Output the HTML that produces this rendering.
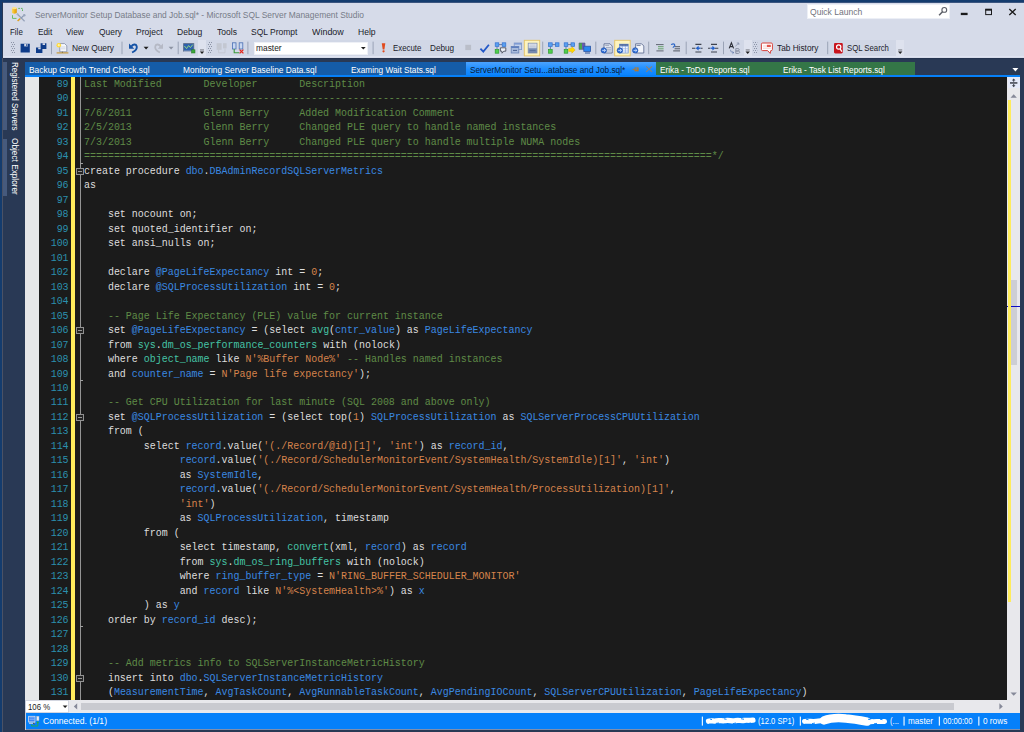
<!DOCTYPE html>
<html><head><meta charset="utf-8"><title>SSMS</title>
<style>
*{box-sizing:border-box}
html,body{margin:0;padding:0}
body{width:1024px;height:732px;overflow:hidden;background:#293955;position:relative;font-family:'Liberation Sans', sans-serif}
.a{position:absolute}
.t{position:absolute;white-space:pre;line-height:12px;transform-origin:0 50%;font-family:'Liberation Sans', sans-serif}
#ed{position:absolute;left:25px;top:77px;width:982.3px;height:623px;background:#1b1b1b;overflow:hidden}
#code,#nums{position:absolute;top:-.2px;font-family:'Liberation Mono', monospace;font-size:11px;line-height:14.49px;white-space:pre;color:#dedede;transform:scaleX(.9056)}
#code{left:59.3px;transform-origin:0 0}
#nums{left:0;width:43.6px;text-align:right;color:#2b91af;transform-origin:100% 0}
.ln{height:14.49px}
.c{color:#5f8b47}.b{color:#3a89e2}.g{color:#45c4a6}.s{color:#d6834b}
.ob{position:absolute;left:76.4px;width:7.2px;height:7px;border:1px solid #909090;background:#242424}
.ob i{position:absolute;left:1px;right:1px;top:1.9px;height:1.2px;background:#959595}
.tk{position:absolute;left:80px;width:3.4px;height:1px;background:#a0a0a0}
</style></head><body>
<!-- window frame -->
<div class="a" style="left:0;top:0;width:1024px;height:1.5px;background:#143c6e"></div>
<div class="a" style="left:0;top:0;width:2.2px;height:732px;background:#143c6e"></div>
<div class="a" style="left:2.2px;top:58px;width:.8px;height:674px;background:#4a5266"></div>
<!-- header -->
<div class="a" style="left:2.8px;top:1.5px;width:1022px;height:56.3px;background:#d6dbe9"></div><div class="a" style="left:2.8px;top:1.5px;width:1022px;height:.6px;background:#3b557f"></div>
<div class="a" style="left:2.8px;top:56.3px;width:1022px;height:1.2px;background:#dfe3f1"></div>
<div class="a" style="left:2.8px;top:57.6px;width:1022px;height:.7px;background:#25334f"></div>
<!-- toolbars -->
<div class="a" style="left:10px;top:39.8px;width:188px;height:16.2px;background:#d1d7e6"></div>
<div class="a" style="left:198px;top:39.8px;width:8px;height:16.2px;background:#dee2ee"></div>
<div class="a" style="left:206px;top:39.8px;width:537.5px;height:16.2px;background:#d1d7e6"></div>
<div class="a" style="left:743.5px;top:39.8px;width:8.5px;height:16.2px;background:#dee2ee"></div>
<div class="a" style="left:752px;top:39.8px;width:144px;height:16.2px;background:#d1d7e6"></div>
<div class="a" style="left:896px;top:39.8px;width:8px;height:16.2px;background:#dee2ee"></div>
<!-- quick launch -->
<div class="a" style="left:806.5px;top:3.9px;width:143px;height:15.2px;background:#fff;border:1px solid #eceff6"></div>
<!-- combo -->
<div class="a" style="left:253.7px;top:42px;width:114.3px;height:12.8px;background:#fff;border:1px solid #eef0f6"></div>
<!-- tab strip -->
<div class="a" style="left:25px;top:62px;width:441px;height:13.4px;background:#155ca8"></div>
<div class="a" style="left:466px;top:62px;width:190.2px;height:13.4px;background:linear-gradient(#4ba3ff,#1a8cff 60%,#0a84ff)"></div>
<div class="a" style="left:656.2px;top:62.2px;width:259px;height:13.2px;background:#347647"></div>
<div class="a" style="left:25px;top:75.2px;width:995.3px;height:1.9px;background:#0680f8"></div>
<!-- side tabs -->
<div class="a" style="left:2.8px;top:62px;width:4.2px;height:68px;background:#465a7d"></div>
<div class="a" style="left:2.8px;top:138.6px;width:4.2px;height:57.4px;background:#465a7d"></div>
<div class="t" style="left:10.2px;top:61.8px;font-size:9.6px;color:#fff;transform-origin:0 0;transform:translate(11px,0) rotate(90deg) scaleX(.835)">Registered Servers</div>
<div class="t" style="left:10.2px;top:138.4px;font-size:9.6px;color:#fff;transform-origin:0 0;transform:translate(11px,0) rotate(90deg) scaleX(.86)">Object Explorer</div>
<!-- editor -->
<div id="ed">
 <div class="a" style="left:0;top:0;width:14.3px;height:623px;background:#e6e7e8"></div>
 <div class="a" style="left:45.55px;top:0;width:4.15px;height:623px;background:#ffec5c"></div>
 <div class="a" style="left:55px;top:0;width:1px;height:623px;background:#949494"></div>
 <div id="nums"><div class="ln">89</div><div class="ln">90</div><div class="ln">91</div><div class="ln">92</div><div class="ln">93</div><div class="ln">94</div><div class="ln">95</div><div class="ln">96</div><div class="ln">97</div><div class="ln">98</div><div class="ln">99</div><div class="ln">100</div><div class="ln">101</div><div class="ln">102</div><div class="ln">103</div><div class="ln">104</div><div class="ln">105</div><div class="ln">106</div><div class="ln">107</div><div class="ln">108</div><div class="ln">109</div><div class="ln">110</div><div class="ln">111</div><div class="ln">112</div><div class="ln">113</div><div class="ln">114</div><div class="ln">115</div><div class="ln">116</div><div class="ln">117</div><div class="ln">118</div><div class="ln">119</div><div class="ln">120</div><div class="ln">121</div><div class="ln">122</div><div class="ln">123</div><div class="ln">124</div><div class="ln">125</div><div class="ln">126</div><div class="ln">127</div><div class="ln">128</div><div class="ln">129</div><div class="ln">130</div><div class="ln">131</div></div>
 <div id="code"><div class="ln"><span class="c">Last Modified       Developer       Description</span></div><div class="ln"><span class="c">-----------------------------------------------------------------------------------------------------------</span></div><div class="ln"><span class="c">7/6/2011            Glenn Berry     Added Modification Comment</span></div><div class="ln"><span class="c">2/5/2013            Glenn Berry     Changed PLE query to handle named instances</span></div><div class="ln"><span class="c">7/3/2013            Glenn Berry     Changed PLE query to handle multiple NUMA nodes</span></div><div class="ln"><span class="c">=========================================================================================================*/</span></div><div class="ln">create procedure <span class="b">dbo</span>.<span class="b">DBAdminRecordSQLServerMetrics</span></div><div class="ln">as</div><div class="ln"></div><div class="ln">    set nocount on;</div><div class="ln">    set quoted_identifier on;</div><div class="ln">    set ansi_nulls on;</div><div class="ln"></div><div class="ln">    declare <span class="b">@PageLifeExpectancy</span> int = <span class="s">0</span>;</div><div class="ln">    declare <span class="b">@SQLProcessUtilization</span> int = <span class="s">0</span>;</div><div class="ln"></div><div class="ln"><span class="c">    -- Page Life Expectancy (PLE) value for current instance</span></div><div class="ln">    set <span class="b">@PageLifeExpectancy</span> = (select <span class="g">avg</span>(<span class="b">cntr_value</span>) as <span class="b">PageLifeExpectancy</span></div><div class="ln">    from <span class="g">sys</span>.<span class="g">dm_os_performance_counters</span> with (nolock)</div><div class="ln">    where <span class="g">object_name</span> like <span class="s">N&#x27;%Buffer Node%&#x27;</span><span class="c"> -- Handles named instances</span></div><div class="ln">    and <span class="b">counter_name</span> = <span class="s">N&#x27;Page life expectancy&#x27;</span>);</div><div class="ln"></div><div class="ln"><span class="c">    -- Get CPU Utilization for last minute (SQL 2008 and above only)</span></div><div class="ln">    set <span class="b">@SQLProcessUtilization</span> = (select top(<span class="s">1</span>) <span class="b">SQLProcessUtilization</span> as <span class="b">SQLServerProcessCPUUtilization</span></div><div class="ln">    from (</div><div class="ln">          select <span class="b">record</span>.value(<span class="s">&#x27;(./Record/@id)[1]&#x27;</span>, <span class="s">&#x27;int&#x27;</span>) as <span class="b">record_id</span>,</div><div class="ln">                <span class="b">record</span>.value(<span class="s">&#x27;(./Record/SchedulerMonitorEvent/SystemHealth/SystemIdle)[1]&#x27;</span>, <span class="s">&#x27;int&#x27;</span>)</div><div class="ln">                as <span class="b">SystemIdle</span>,</div><div class="ln">                <span class="b">record</span>.value(<span class="s">&#x27;(./Record/SchedulerMonitorEvent/SystemHealth/ProcessUtilization)[1]&#x27;</span>,</div><div class="ln">                <span class="s">&#x27;int&#x27;</span>)</div><div class="ln">                as <span class="b">SQLProcessUtilization</span>, timestamp</div><div class="ln">          from (</div><div class="ln">                select timestamp, <span class="g">convert</span>(xml, <span class="b">record</span>) as <span class="b">record</span></div><div class="ln">                from <span class="g">sys</span>.<span class="g">dm_os_ring_buffers</span> with (nolock)</div><div class="ln">                where <span class="b">ring_buffer_type</span> = <span class="s">N&#x27;RING_BUFFER_SCHEDULER_MONITOR&#x27;</span></div><div class="ln">                and <span class="b">record</span> like <span class="s">N&#x27;%&lt;SystemHealth&gt;%&#x27;</span>) as <span class="b">x</span></div><div class="ln">          ) as <span class="b">y</span></div><div class="ln">    order by <span class="b">record_id</span> desc);</div><div class="ln"></div><div class="ln"></div><div class="ln"><span class="c">    -- Add metrics info to SQLServerInstanceMetricHistory</span></div><div class="ln">    insert into <span class="b">dbo</span>.<span class="b">SQLServerInstanceMetricHistory</span></div><div class="ln">    (<span class="b">MeasurementTime</span>, <span class="b">AvgTaskCount</span>, <span class="b">AvgRunnableTaskCount</span>, <span class="b">AvgPendingIOCount</span>, <span class="b">SQLServerCPUUtilization</span>, <span class="b">PageLifeExpectancy</span>)</div></div>
</div>
<div class="a" style="left:0;top:0"><div class="ob" style="top:167.64px"><i></i></div><div class="ob" style="top:327.03px"><i></i></div><div class="ob" style="top:413.97px"><i></i></div><div class="ob" style="top:674.79px"><i></i></div><div class="tk" style="top:162.74px"></div><div class="tk" style="top:380.09px"></div><div class="tk" style="top:626.42px"></div></div>
<!-- v scrollbar -->
<div class="a" style="left:1007.3px;top:77px;width:13px;height:636px;background:#e8e8ec"></div>
<div class="a" style="left:1007.6px;top:77px;width:12.7px;height:11.3px;background:#e4e9f9"></div>
<div class="a" style="left:1007.3px;top:305.9px;width:13px;height:1.5px;background:#0b0bc4"></div>
<div class="a" style="left:1011px;top:280px;width:6px;height:85.3px;background:#cdced4"></div>
<div class="a" style="left:1011px;top:305.9px;width:9px;height:1.5px;background:#0b0bc4"></div>
<div class="a" style="left:1008px;top:100px;width:3px;height:502.3px;background:#ffec5c"></div>
<!-- bottom row -->
<div class="a" style="left:25px;top:700px;width:982.3px;height:13.5px;background:#e8e8ec"></div>
<div class="a" style="left:25px;top:700px;width:43.8px;height:13px;background:#fff;border:1px solid #d3d6e0"></div>
<div class="a" style="left:81.2px;top:703px;width:872.8px;height:6.8px;background:#c9cad0"></div>
<!-- status bar -->
<div class="a" style="left:25px;top:713.1px;width:995.3px;height:16px;background:#0580fa"></div>
<div class="a" style="left:25px;top:729.1px;width:995.3px;height:.9px;background:#7f8fae"></div>
<div class="a" style="left:25px;top:700px;width:.9px;height:30px;background:#c9cedb"></div>
<svg class="a" style="left:0;top:0" width="1024" height="732" viewBox="0 0 1024 732">
<defs>
 <pattern id="grip" width="2" height="4" patternUnits="userSpaceOnUse"><rect x="0" y="0" width="1" height="1" fill="#8b93a6"/><rect x="1" y="2" width="1" height="1" fill="#8b93a6"/></pattern>
 <linearGradient id="cyl" x1="0" x2="1"><stop offset="0" stop-color="#f9d866"/><stop offset=".5" stop-color="#f2b81c"/><stop offset="1" stop-color="#d99a12"/></linearGradient>
 <linearGradient id="isense" x1="0" y1="0" x2="0" y2="1"><stop offset="0" stop-color="#eef1f7"/><stop offset=".5" stop-color="#c9d2e4"/><stop offset=".55" stop-color="#7f93b8"/><stop offset="1" stop-color="#6f84ab"/></linearGradient>
 <g id="sep"><rect x="0" y="41.6" width="1" height="12.6" fill="#9aa3b6"/></g>
 <g id="ovf"><rect x="-2" y="49.400" width="4" height="1.100" fill="#7d7f88"/><path d="M-2.200 51.600h4.400l-2.200 2.300z" fill="#1e1e1e"/></g>
 <g id="bsq"><rect width="3.6" height="3.6" fill="#5aa0f0" stroke="#2f6fd0" stroke-width=".7"/></g>
 <g id="gsq"><rect width="3.6" height="3.6" fill="#4fd04f" stroke="#2c9a2c" stroke-width=".7"/></g>
 <g id="globe"><circle r="2.7" fill="#2f6fd6" stroke="#1c4aa0" stroke-width=".6"/><path d="M-1.6 0h3.2M0.2-1.4l1.5 1.4-1.5 1.4" stroke="#dbe7ff" stroke-width=".8" fill="none"/></g>
</defs>
<!-- app icon -->
<g>
 <path d="M11.9 8.2v4.4c0 .7 1.1 1.2 2.45 1.2s2.45-.5 2.45-1.2V8.2z" fill="url(#cyl)"/>
 <ellipse cx="14.35" cy="8.2" rx="2.45" ry="1.1" fill="#fbe38a"/>
 <path d="M18.3 8.4h4.2v3.4" fill="none" stroke="#5db35d" stroke-width="1" stroke-dasharray="1.6 1"/>
 <path d="M12.5 15.2v3.2h4" fill="none" stroke="#6cbb6c" stroke-width="1"/>
 <path d="M17 13.8l7.6 7.4" stroke="#97a3ba" stroke-width="1.25"/>
 <path d="M24.6 14.6l-4 4" stroke="#8a98b2" stroke-width="1.3"/>
 <path d="M20.2 18.6l-2.600 2.400" stroke="#e0a020" stroke-width="1.5"/>
 <circle cx="24.3" cy="15.2" r="1.2" fill="#9aa7be"/>
 <circle cx="17.6" cy="14.2" r="1" fill="#a7b2c7"/>
</g>
<!-- quick launch magnifier -->
<circle cx="944.3" cy="9.9" r="2.400" fill="none" stroke="#5a5d66" stroke-width="1.1"/>
<path d="M942.5 11.8l-3.400 3.400" stroke="#5a5d66" stroke-width="1.5"/>
<!-- window buttons -->
<rect x="960.8" y="12.8" width="6.8" height="2.3" fill="#1b1b1c"/>
<rect x="985.7" y="9.7" width="5.8" height="4.9" fill="none" stroke="#1b1b1c" stroke-width="1"/>
<rect x="985.2" y="8.7" width="6.8" height="1.9" fill="#1b1b1c"/>
<path d="M1009.3 9.1l6.4 5.9M1015.7 9.1l-6.4 5.9" stroke="#1b1b1c" stroke-width="1.35"/>
<!-- toolbar 1 -->
<rect x="11" y="42" width="4" height="11" fill="url(#grip)"/>
<g fill="#0e3c8a">
 <path d="M20.6 43.8h9.2v8.6h-9.2z"/>
 <path d="M40.6 43.3h5.8v5.6h-5.8zM36 47.4h6.4v5.6H36z"/>
</g>
<path d="M24.2 43.8h3.6v2.6h-3.6z" fill="#d6dbe9"/><rect x="26.3" y="44.1" width="1" height="1.9" fill="#0e3c8a"/>
<path d="M42.6 43.3h2.4v1.8h-2.4zM38.2 47.4h2.5v1.8h-2.5z" fill="#d6dbe9"/>
<use href="#sep" x="51"/>
<!-- new query -->
<g>
 <path d="M59.8 43.6h4.8l2.2 2.2v6h-7z" fill="#f6f8fc" stroke="#7f8aa3" stroke-width=".8"/>
 <path d="M61 47h4.5M61 48.8h4.5" stroke="#b9c1d3" stroke-width=".6"/>
 <circle cx="58.8" cy="45.2" r="2.3" fill="#ffd93b"/><circle cx="58.8" cy="45.2" r="1.1" fill="#fff3a8"/>
 <path d="M56.6 52.9h11.8" stroke="#c7962e" stroke-width="1.1"/><path d="M62.4 51.6v1.4" stroke="#8a7a4a" stroke-width="1"/>
</g>
<use href="#sep" x="121.5"/>
<!-- undo -->
<g fill="none" stroke="#1553a6" stroke-width="1.9" stroke-linecap="butt">
 <path d="M131.4 46.6c1.2-2.6 4.6-2.9 5.3-.4.6 2.3-1.2 4.6-4.6 6.3"/>
</g>
<path d="M129 43.4v5.3h5.3z" fill="#1553a6"/>
<path d="M143.6 46.8h5l-2.5 2.6z" fill="#1e1e1e"/>
<!-- redo (disabled) -->
<g fill="none" stroke="#b5b9c5" stroke-width="1.8"><path d="M160.6 46.6c-1.2-2.6-4.6-2.9-5.3-.4-.6 2.3 1.2 4.6 4.6 6.3"/></g>
<path d="M163 43.4v5.3h-5.3z" fill="#b5b9c5"/>
<path d="M168.6 46.8h5l-2.5 2.6z" fill="#8d93a3"/>
<use href="#sep" x="177.7"/>
<!-- activity monitor -->
<g>
 <rect x="183.6" y="43.6" width="10.2" height="7.6" fill="#2f62ad" stroke="#5a6a86" stroke-width=".8"/>
 <path d="M184.4 46l2.2 2.6 2-3 1.8 2 2.4-3" fill="none" stroke="#9be27d" stroke-width=".9"/>
 <path d="M184 51.2h9.6" stroke="#c9d2e2" stroke-width=".8"/>
 <rect x="191.6" y="49.8" width="3.4" height="3.2" fill="#3aa63a" stroke="#23741f" stroke-width=".5"/>
</g>
<use href="#ovf" x="202"/>
<!-- toolbar 2 -->
<rect x="208" y="42" width="4" height="11" fill="url(#grip)"/>
<g fill="#c3c7d1"><rect x="216.6" y="43.2" width="5" height="6.6"/><rect x="223" y="43.2" width="3.6" height="5.2"/><path d="M218.6 49.8v3h6.4v-4.4" fill="none" stroke="#c3c7d1" stroke-width=".9"/></g>
<g>
 <rect x="232.4" y="42.8" width="3.6" height="6.2" fill="#c9d8f2" stroke="#4a70b4" stroke-width=".8"/>
 <rect x="239.2" y="42.8" width="3.6" height="6.2" fill="#c9d8f2" stroke="#4a70b4" stroke-width=".8"/>
 <path d="M234.2 49v3.7h5" fill="none" stroke="#3a9a3a" stroke-width="1.1"/>
 <path d="M239.6 49.6l3.8 3.8M243.4 49.6l-3.8 3.8" stroke="#e3281e" stroke-width="1.3"/>
</g>
<use href="#sep" x="247.4"/>
<path d="M360.9 47.1h4.8l-2.4 2.5z" fill="#1e1e1e"/>
<use href="#sep" x="372.6"/>
<!-- execute -->
<path d="M381.8 43.3h3.5l-.9 6.2h-1.7z" fill="#e14a1c"/><circle cx="383.55" cy="51.3" r="1.15" fill="#e14a1c"/>
<rect x="465.3" y="44.8" width="5.8" height="5.3" fill="#babec9"/>
<path d="M480.4 48.6l2.9 3 5.6-6.8" fill="none" stroke="#2358c7" stroke-width="1.8"/>
<!-- estimated plan -->
<g>
 <use href="#bsq" x="495.2" y="42.8"/><use href="#bsq" x="502.2" y="42.8"/><path d="M499 44.6h3" stroke="#39558a" stroke-width=".7"/>
 <path d="M497 46.8v2.4" stroke="#39558a" stroke-width=".7"/>
 <use href="#gsq" x="495.2" y="49.6"/>
 <path d="M500.4 47.8h5.4v3.4h-2l-1.8 2v-2h-1.6z" fill="#eef1f7" stroke="#3a3f4c" stroke-width=".8"/>
</g>
<!-- query options -->
<g>
 <rect x="514.2" y="43" width="7.4" height="6.6" fill="#c3d2ec" stroke="#7f97c6" stroke-width=".8"/><rect x="514.2" y="43" width="7.4" height="1.6" fill="#7f9bd2"/>
 <rect x="511.2" y="46.4" width="7.6" height="6.6" fill="#a9bbdc" stroke="#6a84b6" stroke-width=".8"/><rect x="511.2" y="46.4" width="7.6" height="1.6" fill="#5f7fbe"/>
 <path d="M513 50.4h4" stroke="#48608f" stroke-width="1"/>
</g>
<!-- intellisense (checked) -->
<rect x="524.3" y="40.3" width="15.4" height="15.6" fill="#fdf4bf" stroke="#e5c365" stroke-width=".9"/>
<rect x="528.2" y="43.2" width="8.8" height="9.8" fill="url(#isense)" stroke="#7f8fae" stroke-width=".8"/>
<path d="M529.6 45h6M529.6 46.8h6" stroke="#aab4c8" stroke-width=".6"/><path d="M529.6 50.4h6" stroke="#4f6690" stroke-width=".8"/>
<use href="#sep" x="542.2"/>
<!-- actual plan -->
<g>
 <use href="#bsq" x="548.6" y="42.8"/><use href="#bsq" x="555.4" y="42.8"/><path d="M552.4 44.6h3" stroke="#39558a" stroke-width=".7"/><path d="M550.4 46.8v2.4" stroke="#39558a" stroke-width=".7"/>
 <use href="#gsq" x="548.6" y="49.6"/>
</g>
<g>
 <use href="#bsq" x="564.2" y="42.8"/><use href="#bsq" x="571" y="42.8"/><path d="M568 44.6h3" stroke="#39558a" stroke-width=".7"/><path d="M566 46.8v2.4" stroke="#39558a" stroke-width=".7"/>
 <use href="#gsq" x="564.2" y="49.6"/>
 <path d="M568.6 48.4h3.2v-1.8l3.4 3.3-3.4 3.3v-1.8h-3.2z" fill="#ffd800" stroke="#d8a800" stroke-width=".4"/>
</g>
<!-- client stats -->
<g>
 <rect x="579" y="43" width="3" height="6.4" fill="#4aa84a"/><rect x="582" y="43" width="3" height="6.4" fill="#6a5ab0"/><path d="M579 43h6v6.4h-6z" fill="none" stroke="#566083" stroke-width=".6"/>
 <rect x="583.8" y="46.2" width="6.8" height="5.2" fill="#2b86f0" stroke="#2a56a6" stroke-width=".8"/>
 <path d="M585 53h5" stroke="#4b6aa6" stroke-width="1.2"/>
</g>
<use href="#sep" x="595.3"/>
<!-- results to text -->
<g>
 <path d="M604 43.8h6l2.2 2.2v7H604z" fill="#e6ebf5" stroke="#55658a" stroke-width=".8"/>
 <path d="M605.2 45.4h4M606 47.4h5M606 49.2h5M606 51h5" stroke="#6d7b9a" stroke-width=".6"/>
 <use href="#globe" x="603.8" y="50.4"/>
</g>
<!-- results to grid (checked) -->
<rect x="614.7" y="40.3" width="15.5" height="15.6" fill="#fdf4bf" stroke="#e5c365" stroke-width=".9"/>
<g>
 <rect x="619.6" y="44.2" width="8.6" height="8.8" fill="#fff" stroke="#6f93d6" stroke-width=".8"/>
 <path d="M619.6 46.6h8.6M619.6 48.8h8.6M619.6 51h8.6M622.4 44.2v8.8M625.4 44.2v8.8" stroke="#86a7e2" stroke-width=".7"/>
 <rect x="619.6" y="44.2" width="8.6" height="1.6" fill="#44609a"/>
 <use href="#globe" x="619.8" y="50.4"/>
</g>
<!-- results to file -->
<g>
 <path d="M635.6 43.8h6l2.2 2.2v7h-8.2z" fill="#f1f4fa" stroke="#55658a" stroke-width=".8"/>
 <path d="M636.6 45.4h4" stroke="#55658a" stroke-width=".8"/>
 <use href="#globe" x="635.2" y="50.4"/>
</g>
<use href="#sep" x="648.2"/>
<!-- comment / uncomment -->
<g stroke-width=".95">
 <path d="M656 44.6h7.6" stroke="#5b606d"/><path d="M658 46.7h5.6M658 48.8h5.6" stroke="#5f9f63"/><path d="M656.4 50.9h7.2" stroke="#5b606d"/>
 <path d="M674.6 46.7h5.4M674.6 48.8h5.4M673.2 50.9h6.8" stroke="#4b505c"/>
</g>
<path d="M671.4 45c.2-1.4 3.4-1.6 3.4.2 0 1.300-1.700 1.100-1.700 2.600" fill="none" stroke="#2c66c8" stroke-width="1.2"/>
<use href="#sep" x="685.7"/>
<!-- indent -->
<g stroke="#3d424e" stroke-width="1.1">
 <path d="M695.4 44.4h6M695.4 52h6M692 48.2h3.4M700.6 48.2h2"/>
 <path d="M711 44.4h6M711 52h6M708 48.2h2M715 48.2h3.3"/>
</g>
<path d="M700.4 48.200h-3" stroke="#1f5fcc" stroke-width="1.3"/><path d="M698.600 45.800v4.800l-2.900-2.400z" fill="#1f5fcc"/>
<path d="M710.4 48.200h3" stroke="#1f5fcc" stroke-width="1.3"/><path d="M712.400 45.800v4.800l2.900-2.400z" fill="#1f5fcc"/>
<use href="#sep" x="723"/>
<!-- A->B -->
<g>
 <path d="M729.200 48.400l2.200-5.600 2.200 5.600M730 46.600h3.200" fill="none" stroke="#2a2d36" stroke-width="1.1"/>
 <path d="M735.800 48.600v4.800h2.400c2 0 2-2.400 0-2.400h-2.400 2.200c1.700 0 1.700-2.400 0-2.400z" fill="none" stroke="#8c93a5" stroke-width="1"/>
 <path d="M735.400 46.200l3.400-3.200M738.800 43h-2M738.800 43v2" stroke="#7f8aa3" stroke-width=".7" fill="none"/>
 <path d="M730.600 49.800c0 2 1 2.800 3.200 2.800M733.800 52.600l-1.400-1.200M733.800 52.600l-1.400 1.200" stroke="#5f77a8" stroke-width=".7" fill="none"/>
</g>
<use href="#ovf" x="747.7"/>
<!-- toolbar 3 -->
<rect x="753.3" y="42" width="4" height="11" fill="url(#grip)"/>
<g>
 <path d="M762.600 43h8.600c.8 0 1.200.4 1.200 1.200v5.200c0 .8-.4 1.200-1.200 1.200h-.400l-.6 2.800-2.600-2.800h-5c-.8 0-1.200-.4-1.200-1.200v-5.200c0-.8.400-1.200 1.200-1.200z" fill="#fff" stroke="#d8403a" stroke-width="1"/>
 <rect x="766.800" y="44.800" width="4" height="2.200" fill="#e2554d"/><path d="M763 46h3.200M763 48.200h7.800" stroke="#f0b5b1" stroke-width=".7"/>
</g>
<use href="#sep" x="827.2"/>
<g>
 <path d="M835.400 42.900h6c.9 0 1.400.5 1.400 1.400v7.800c0 .9-.5 1.400-1.400 1.400h-6c-.9 0-1.400-.5-1.400-1.400v-7.800c0-.9.500-1.400 1.400-1.400z" fill="#c8141d"/>
 <circle cx="838.7" cy="47" r="2.150" fill="none" stroke="#fff" stroke-width="1.2"/><path d="M840.100 48.800l1.800 2.900" stroke="#fff" stroke-width="1.3"/>
</g>
<use href="#ovf" x="900.2"/>
<!-- tab strip icons -->
<path d="M1012.4 68.100h6l-3 3.300z" fill="#fff"/>
<g stroke="#b8782a" stroke-width=".9" fill="none"><path d="M632.400 69.400h2.600M635 67.400v4M635 68h2.900v2.800h-2.900M638 67.300v4.200"/><path d="M635 70.300h3" stroke-width="1.300"/></g>
<path d="M646.200 66.300l5.800 5.600M652 66.300l-5.800 5.600" stroke="#8f8272" stroke-width="1.150"/>
<!-- splitter + scroll arrows -->
<g fill="#3b3f4a"><rect x="1010" y="82.200" width="7.400" height="1.500"/><path d="M1013.700 78.600l1.800 2h-1.300v1.200h-1v-1.200h-1.300zM1013.700 87.300l1.800-2h-1.300v-1.200h-1v1.200h-1.300z"/></g>
<path d="M1010.500 97.700l3.200-3.400 3.200 3.400z" fill="#868999"/>
<path d="M1010.500 692.400l3.200 3.400 3.200-3.400z" fill="#868999"/>
<path d="M77.200 703.200v6.400l-3.400-3.200z" fill="#868999"/>
<path d="M999.400 703.200v6.400l3.400-3.200z" fill="#868999"/>
<path d="M62.700 705.600h4.800l-2.400 2.500z" fill="#1e1e1e"/>
<!-- status icon -->
<g>
 <rect x="28.600" y="716.300" width="6.400" height="5.600" fill="#3f86f2" stroke="#d3dcee" stroke-width=".8"/>
 <path d="M29.600 717.800h4.800M29.600 719.400h4.800" stroke="#9cc0ff" stroke-width=".6"/>
 <path d="M28.600 722.600h6.800l-.6 1.200h-5.600z" fill="#d9dde6"/><path d="M33 723.200l1.800.6" stroke="#222" stroke-width=".8"/>
 <rect x="36.600" y="716.200" width="2.400" height="4.400" fill="#e9ecf2" stroke="#aab4c8" stroke-width=".4"/>
 <circle cx="37.800" cy="722.400" r="1" fill="#2fb52f"/>
 <path d="M31.600 724.400v1.600h6.200v-2.600" fill="none" stroke="#2fb52f" stroke-width=".8"/>
</g>
<!-- status separators + redactions -->
<g fill="#fff">
 <rect x="701.800" y="716.600" width="1.100" height="9"/><rect x="799.800" y="716.600" width="1.100" height="9"/><rect x="903.500" y="716.600" width="1.100" height="9"/><rect x="938.800" y="716.600" width="1.100" height="9"/><rect x="978.300" y="716.600" width="1.100" height="9"/>
 <path d="M708.500 721.200c3-1.200 5 .600 8-.400 3-.800 6 .600 9-.200 4-.600 6 .800 10 0 3-.600 6 .400 9-.200 3-.400 5 .200 8.500-.200" fill="none" stroke="#fff" stroke-width="5.200" stroke-linecap="round"/>
 <path d="M710 719l2 .600M716 723.400l3-.400M724 718.800l2.500.500M733 723.600l3-.600M741 718.700l3 .600M748 723.500l3-.500" stroke="#0580fa" stroke-width=".9" fill="none"/>
 <path d="M804.500 721.400c4-.600 8 .400 12-.200 3-.500 6-.200 9-.800" fill="none" stroke="#fff" stroke-width="5" stroke-linecap="round"/>
 <path d="M824 720.400c6-2.400 14-2.800 22-2 8 .600 14 1.800 21 3.200" fill="none" stroke="#fff" stroke-width="8.500" stroke-linecap="round"/>
 <path d="M862 721.800c4-.600 7 .200 11-.200 4-.600 8 .200 11.500-.200" fill="none" stroke="#fff" stroke-width="5" stroke-linecap="round"/>
 <path d="M806 719.200l2.500.500M812 723.600l3-.500M868 719.200l2.500.400M874 723.800l3-.400M880 719.200l2.500.500" stroke="#0580fa" stroke-width=".9" fill="none"/>
</g>
</svg>

<div class="t" style="left:34.80px;top:8.67px;font-size:9.6px;color:#777c88;transform:scaleX(0.8759);">ServerMonitor Setup Database and Job.sql* - Microsoft SQL Server Management Studio</div><div class="t" style="left:10.20px;top:25.87px;font-size:9.6px;color:#1b1b2a;transform:scaleX(0.8275);">File</div><div class="t" style="left:37.50px;top:25.87px;font-size:9.6px;color:#1b1b2a;transform:scaleX(0.8612);">Edit</div><div class="t" style="left:66.40px;top:25.87px;font-size:9.6px;color:#1b1b2a;transform:scaleX(0.8533);">View</div><div class="t" style="left:98.60px;top:25.87px;font-size:9.6px;color:#1b1b2a;transform:scaleX(0.8760);">Query</div><div class="t" style="left:136.00px;top:25.87px;font-size:9.6px;color:#1b1b2a;transform:scaleX(0.8875);">Project</div><div class="t" style="left:176.75px;top:25.87px;font-size:9.6px;color:#1b1b2a;transform:scaleX(0.8928);">Debug</div><div class="t" style="left:217.00px;top:25.87px;font-size:9.6px;color:#1b1b2a;transform:scaleX(0.8881);">Tools</div><div class="t" style="left:251.00px;top:25.87px;font-size:9.6px;color:#1b1b2a;transform:scaleX(0.8849);">SQL Prompt</div><div class="t" style="left:311.50px;top:25.87px;font-size:9.6px;color:#1b1b2a;transform:scaleX(0.9319);">Window</div><div class="t" style="left:357.60px;top:25.87px;font-size:9.6px;color:#1b1b2a;transform:scaleX(0.8918);">Help</div><div class="t" style="left:71.50px;top:41.67px;font-size:9.6px;color:#1b1b2a;transform:scaleX(0.8753);">New Query</div><div class="t" style="left:255.90px;top:42.27px;font-size:9.6px;color:#1b1b1b;transform:scaleX(0.8729);">master</div><div class="t" style="left:393.25px;top:41.67px;font-size:9.6px;color:#1b1b2a;transform:scaleX(0.8177);">Execute</div><div class="t" style="left:430.00px;top:41.67px;font-size:9.6px;color:#1b1b2a;transform:scaleX(0.8522);">Debug</div><div class="t" style="left:777.00px;top:41.67px;font-size:9.6px;color:#1b1b2a;transform:scaleX(0.8628);">Tab History</div><div class="t" style="left:847.10px;top:41.67px;font-size:9.6px;color:#1b1b2a;transform:scaleX(0.8072);">SQL Search</div><div class="t" style="left:809.80px;top:5.77px;font-size:9.6px;color:#70737c;transform:scaleX(0.8914);">Quick Launch</div><div class="t" style="left:28.75px;top:63.52px;font-size:9.6px;color:#ffffff;transform:scaleX(0.8759);">Backup Growth Trend Check.sql</div><div class="t" style="left:183.00px;top:63.52px;font-size:9.6px;color:#ffffff;transform:scaleX(0.8723);">Monitoring Server Baseline Data.sql</div><div class="t" style="left:350.50px;top:63.52px;font-size:9.6px;color:#ffffff;transform:scaleX(0.8623);">Examing Wait Stats.sql</div><div class="t" style="left:469.75px;top:63.52px;font-size:9.6px;color:#0a1a36;transform:scaleX(0.8612);">ServerMonitor Setu...atabase and Job.sql*</div><div class="t" style="left:659.50px;top:63.52px;font-size:9.6px;color:#ffffff;transform:scaleX(0.8623);">Erika - ToDo Reports.sql</div><div class="t" style="left:783.00px;top:63.52px;font-size:9.6px;color:#ffffff;transform:scaleX(0.8571);">Erika - Task List Reports.sql</div><div class="t" style="left:27.80px;top:700.71px;font-size:9.2px;color:#1b1b1b;transform:scaleX(0.8518);">106 %</div><div class="t" style="left:43.00px;top:714.97px;font-size:9.6px;color:#ffffff;transform:scaleX(0.8955);">Connected. (1/1)</div><div class="t" style="left:758.40px;top:714.97px;font-size:9.6px;color:#ffffff;transform:scaleX(0.7913);">(12.0 SP1)</div><div class="t" style="left:889.60px;top:714.97px;font-size:9.6px;color:#ffffff;transform:scaleX(0.8033);">(...</div><div class="t" style="left:908.00px;top:714.97px;font-size:9.6px;color:#ffffff;transform:scaleX(0.8524);">master</div><div class="t" style="left:943.00px;top:714.97px;font-size:9.6px;color:#ffffff;transform:scaleX(0.7896);">00:00:00</div><div class="t" style="left:982.50px;top:714.97px;font-size:9.6px;color:#ffffff;transform:scaleX(0.8579);">0 rows</div>
</body></html>
